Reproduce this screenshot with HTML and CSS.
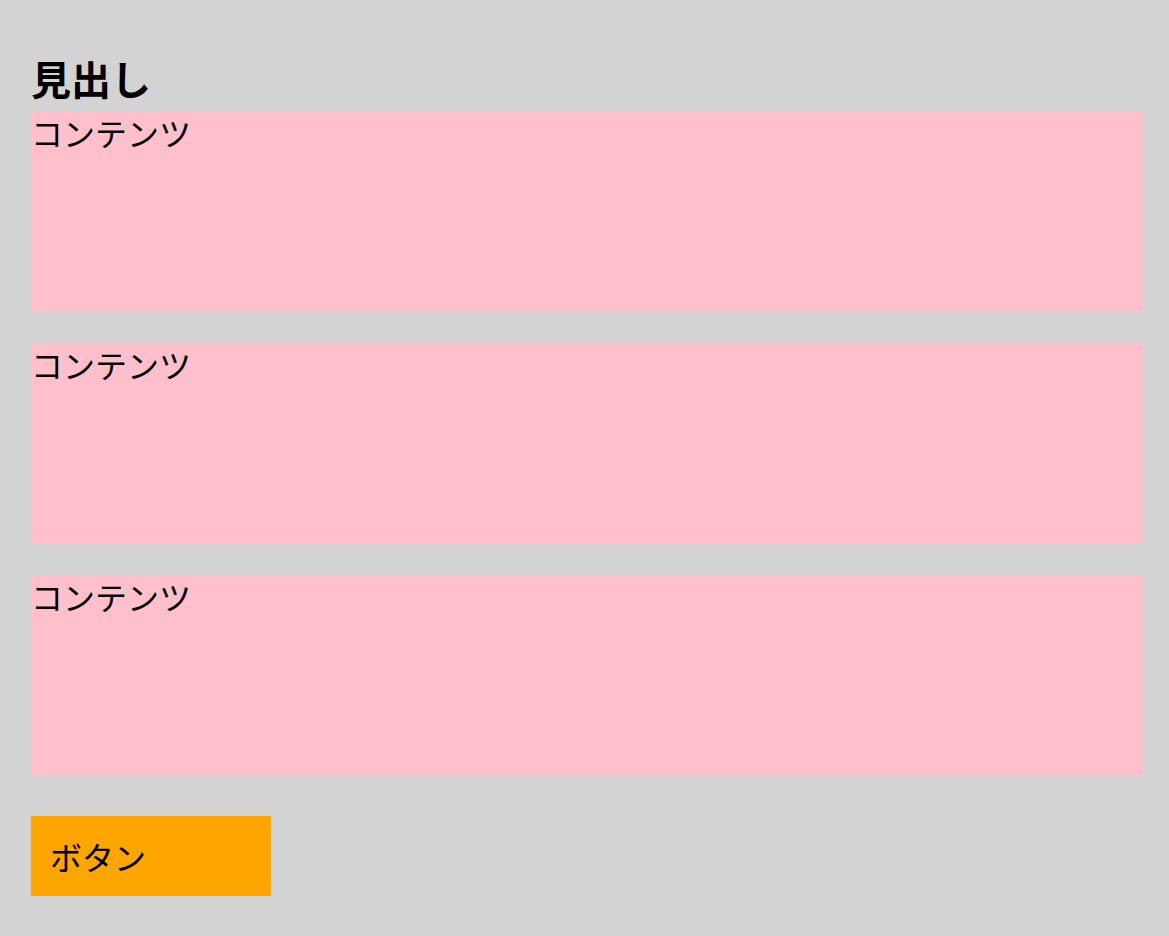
FILE: index.html
```html
<!DOCTYPE html>
<html lang="ja">
<head>
    <meta charset="UTF-8">
    <meta name="viewport" content="width=device-width, initial-scale=1.0">
    <title>見出し</title>
    <link rel="stylesheet" href="styles.css">
</head>
<body>
    <div class="wrapper">
        <h1 class="title">見出し</h1>
        <div class="content-list">
            <div class="content">コンテンツ</div>
            <div class="content">コンテンツ</div>
            <div class="content">コンテンツ</div>
        </div>
        <button class="btn">ボタン</button>
    </div>
</body>
</html>
```

FILE: styles.css
```css
body {
    margin: 0;
    background-color: lightgray;
    font-family: "Noto Sans CJK JP", "Noto Sans", sans-serif;
    color: #000;
}
.wrapper {
    padding: 52px 26px 40px 31px;
    display: flex;
    flex-direction: column;
    align-items: flex-start;
}
.title {
    margin: 0 0 8px;
    font-size: 40px;
    font-weight: 700;
    line-height: 52px;
}
.content-list {
    align-self: stretch;
    display: flex;
    flex-direction: column;
    gap: 32px;
}
.content {
    background: pink;
    height: 200px;
    font-size: 32px;
    line-height: 40px;
}
.btn {
    margin-top: 40px;
    width: 240px;
    height: 80px;
    padding: 0 19px;
    border: none;
    border-radius: 0;
    background: orange;
    color: #000;
    font-family: inherit;
    font-size: 32px;
    line-height: 40px;
    text-align: left;
    cursor: pointer;
}
```
